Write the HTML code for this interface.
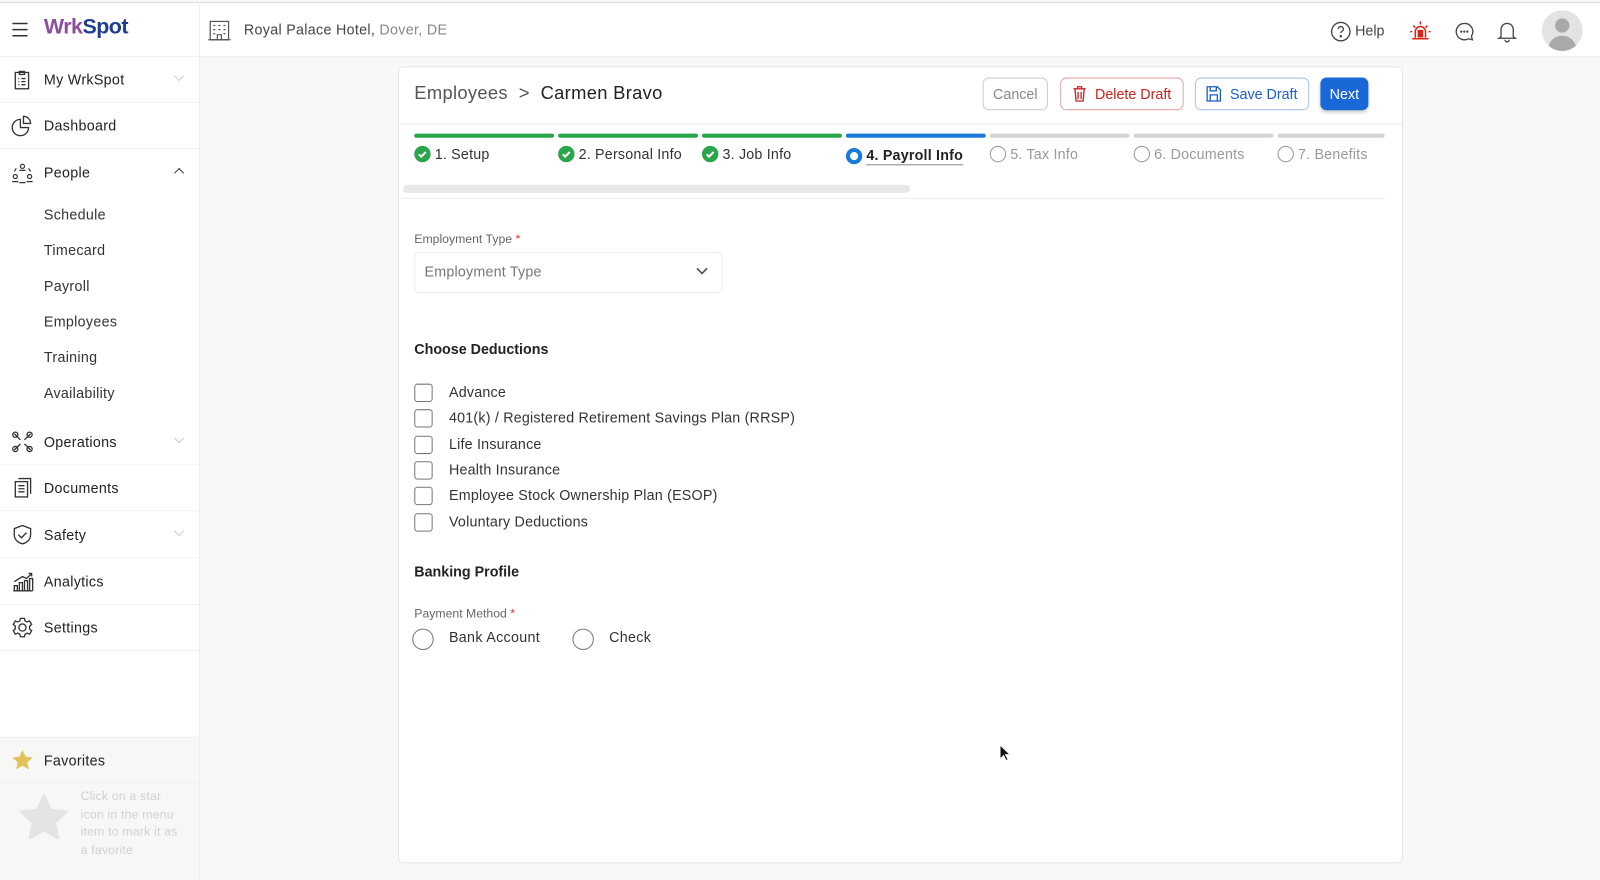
<!DOCTYPE html>
<html><head><meta charset="utf-8"><style>
*{box-sizing:border-box;margin:0;padding:0}
html,body{width:1600px;height:880px;overflow:hidden;background:#f8f8f7;font-family:"Liberation Sans",sans-serif;color:#222}
#w{position:absolute;left:0;top:0;width:1568px;height:862px;transform:scale(1.0204);transform-origin:0 0;background:#f8f8f7}
.abs{position:absolute}
.hdr{left:0;top:2px;width:1568px;height:54px;background:#fff;border-top:1px solid #ddd;border-bottom:1px solid #eee}
.side{left:0;top:56px;width:196px;height:806px;background:#fff;border-right:1px solid #eee}
.it{position:absolute;left:0;width:195px;height:45px;font-size:14px;color:#222;display:flex;align-items:center;padding-left:43px;border-bottom:1px solid #f2f2f2;letter-spacing:.3px}
.it svg{position:absolute;left:11px}
.sub{position:absolute;left:43px;font-size:14px;color:#333;letter-spacing:.3px}
.chev{position:absolute;right:16px;width:7px;height:7px;border-right:1.3px solid #ccc;border-bottom:1.3px solid #ccc;transform:rotate(45deg);top:15px}
.card{left:390px;top:65px;width:985px;height:781px;background:#fff;border:1px solid #e6e6e6;border-radius:5px}
.btn{position:absolute;top:76px;height:32px;border-radius:6px;font-size:14px;display:flex;align-items:center;justify-content:center}
.bar{position:absolute;top:131px;height:4px;width:137px;border-radius:2px}
.lab{position:absolute;top:143px;font-size:14px;display:flex;align-items:center;gap:4px;white-space:nowrap;letter-spacing:.2px}
.ck{width:16px;height:16px;border-radius:50%;background:#2aa54a;display:inline-flex;align-items:center;justify-content:center}
.em{width:16px;height:16px;border-radius:50%;border:1.5px solid #999;display:inline-block}
.cb{position:absolute;left:406px;width:18px;height:18px;border:1.5px solid #777;border-radius:3px}
.cl{position:absolute;left:440px;font-size:14px;color:#333;letter-spacing:.2px}
</style></head><body><div id="w">
<div class="abs hdr"></div>
<svg class="abs" style="left:12px;top:22px" width="16" height="14"><path d="M0 1h15M0 7h15M0 13h15" stroke="#333" stroke-width="1.5"/></svg>
<div class="abs" style="left:43px;top:15px;font-size:21px;font-weight:bold;letter-spacing:-0.5px"><span style="color:#8e4d9c">Wrk</span><span style="color:#1c3f8f">Spot</span></div>
<div class="abs" style="left:195px;top:2px;width:1px;height:54px;background:#eee"></div>
<svg class="abs" style="left:204px;top:18px" width="22" height="22" fill="none" stroke="#555" stroke-width="1.2"><rect x="2" y="3" width="18" height="18"/><path d="M0 21h22M5 7h2M10 7h2M15 7h2M5 11h2M10 11h2M15 11h2M5 15h2M15 15h2M9 21v-5h4v5"/></svg>
<div class="abs" style="left:239px;top:21px;font-size:14px;color:#444;letter-spacing:.3px">Royal Palace Hotel, <span style="color:#888">Dover, DE</span></div>
<svg class="abs" style="left:1304px;top:21px" width="20" height="20" fill="none" stroke="#444" stroke-width="1.3"><circle cx="10" cy="10" r="9"/><path d="M7.5 7.5a2.5 2.5 0 1 1 3.5 2.3c-.8.4-1 1-1 1.7"/><circle cx="10" cy="14.5" r=".6" fill="#444"/></svg>
<div class="abs" style="left:1328px;top:22px;font-size:14px;color:#444">Help</div>
<svg class="abs" style="left:1381px;top:19px" width="22" height="22" fill="none" stroke="#d8261c" stroke-width="1.5"><path d="M6 18v-6a5 5 0 0 1 10 0v6M3 19h16M11 2v3M4 6l2 2M18 6l-2 2M1 12h2M19 12h2"/><rect x="9" y="11" width="4" height="6" fill="#d8261c"/></svg>
<svg class="abs" style="left:1425px;top:21px" width="20" height="20" fill="none" stroke="#444" stroke-width="1.3"><path d="M10 2a8 8 0 1 0 4 15l4 1-1-3.5A8 8 0 0 0 10 2z"/><circle cx="7" cy="10" r=".5" fill="#444"/><circle cx="10" cy="10" r=".5" fill="#444"/><circle cx="13" cy="10" r=".5" fill="#444"/></svg>
<svg class="abs" style="left:1467px;top:20px" width="20" height="22" fill="none" stroke="#444" stroke-width="1.3"><path d="M4 16V9a6 6 0 0 1 12 0v7l2 1.5H2zM8 19a2 2 0 0 0 4 0"/></svg>
<div class="abs" style="left:1511px;top:10px;width:40px;height:40px;border-radius:50%;background:#e3e3e3;overflow:hidden"><div class="abs" style="left:13px;top:8px;width:14px;height:14px;border-radius:50%;background:#a9a9a9"></div><div class="abs" style="left:6px;top:25px;width:28px;height:18px;border-radius:14px 14px 0 0;background:#a9a9a9"></div></div>

<div class="abs side">
<div class="it" style="top:0">My WrkSpot<svg width="20" height="20" fill="none" stroke="#333" stroke-width="1.3"><rect x="4" y="3" width="13" height="16"/><path d="M8 2h5v3H8zM7 9h1M10 9h4M7 12h1M10 12h4M7 15h1M10 15h4"/></svg><i class="chev"></i></div>
<div class="it" style="top:45px">Dashboard<svg width="22" height="22" fill="none" stroke="#333" stroke-width="1.3"><path d="M9 5a8 8 0 1 0 8 8H9z"/><path d="M12 2a7 7 0 0 1 7 7h-7z"/></svg></div>
<div class="it" style="top:90px;border:0">People<svg width="22" height="22" fill="none" stroke="#333" stroke-width="1.2"><circle cx="11" cy="5" r="2"/><circle cx="4" cy="15" r="2"/><circle cx="18" cy="15" r="2"/><path d="M8 9h6M1 20h6M15 20h6M8 21h6M3 10l2-3M19 10l-2-3"/></svg><i class="chev" style="border-color:#333;transform:rotate(-135deg);top:20px"></i></div>
<div class="sub" style="top:146px">Schedule</div>
<div class="sub" style="top:181px">Timecard</div>
<div class="sub" style="top:216px">Payroll</div>
<div class="sub" style="top:251px">Employees</div>
<div class="sub" style="top:286px">Training</div>
<div class="sub" style="top:321px">Availability</div>
<div class="it" style="top:355px">Operations<svg width="22" height="22" fill="none" stroke="#333" stroke-width="1.3"><path d="M3 3l6 6M19 3l-6 6M3 19l6-6M19 19l-6-6"/><circle cx="4" cy="4" r="2.5"/><circle cx="18" cy="4" r="2.5"/><circle cx="4" cy="18" r="2.5"/><circle cx="18" cy="18" r="2.5"/></svg><i class="chev"></i></div>
<div class="it" style="top:400px">Documents<svg width="22" height="22" fill="none" stroke="#333" stroke-width="1.3"><rect x="4" y="5" width="12" height="15"/><path d="M7 2h12v15M7 9h6M7 12h6M7 15h6"/></svg></div>
<div class="it" style="top:446px">Safety<svg width="22" height="22" fill="none" stroke="#333" stroke-width="1.3"><path d="M11 2l8 3v6c0 5-4 8-8 9-4-1-8-4-8-9V5z"/><path d="M7 11l3 3 5-5"/></svg><i class="chev"></i></div>
<div class="it" style="top:492px">Analytics<svg width="22" height="22" fill="none" stroke="#333" stroke-width="1.3"><path d="M2 20h19M3 20v-5h3v5M8 20v-8h3v8M13 20v-10h3v10M18 20v-12h3v12M3 11l8-5 4 2 5-5M17 3h3v3"/></svg></div>
<div class="it" style="top:537px">Settings<svg width="22" height="22" fill="none" stroke="#333" stroke-width="1.3"><circle cx="11" cy="11" r="3.5"/><path d="M9 2h4l.5 2.5 2 1 2.5-1 2 3.5-2 1.6v2.8l2 1.6-2 3.5-2.5-1-2 1L13 20H9l-.5-2.5-2-1-2.5 1-2-3.5 2-1.6V9.6l-2-1.6 2-3.5 2.5 1 2-1z"/></svg></div>
<div class="abs" style="left:0;top:673px;width:195px;height:133px;background:#f7f7f6"></div>
<div class="it" style="top:666px;background:#f7f7f6;border-top:1px solid #eee;border-bottom:1px dotted #e8e8e8">Favorites<svg width="22" height="22"><path d="M11 1l3 6.5 7 .8-5.2 4.8 1.4 7L11 16.5 4.8 20l1.4-7L1 8.3l7-.8z" fill="#e2c35a"/></svg></div>
<svg class="abs" style="left:18px;top:722px" width="50" height="50"><path d="M25 2l6.5 14 15 1.6-11.2 10.4 3.2 15L25 35.5 11.5 43l3.2-15L3.5 17.6l15-1.6z" fill="#e4e4e6" stroke="#e4e4e6" stroke-linejoin="round" stroke-width="3"/></svg>
<div class="abs" style="left:79px;top:716px;width:103px;font-size:12px;line-height:17.5px;color:#d0d0d4;letter-spacing:.2px">Click on a star icon in the menu item to mark it as a favorite</div>
</div>

<div class="abs card"></div>
<div class="abs" style="left:406px;top:81px;font-size:18px;color:#555;letter-spacing:.3px">Employees &nbsp;&gt;&nbsp; <span style="color:#222">Carmen Bravo</span></div>
<div class="btn" style="left:963px;width:64px;border:1px solid #ccc;color:#888">Cancel</div>
<div class="btn" style="left:1039px;width:121px;border:1px solid #e2a6a6;color:#c8221c;gap:8px"><svg width="14" height="16" fill="none" stroke="#c8221c" stroke-width="1.3"><path d="M1 3h12M5 3V1h4v2M2.5 3l1 12h7l1-12M5.5 6v7M8.5 6v7"/></svg>Delete Draft</div>
<div class="btn" style="left:1171px;width:112px;border:1px solid #a9c3e8;color:#1a5ec8;gap:8px"><svg width="15" height="16" fill="none" stroke="#1a5ec8" stroke-width="1.3"><path d="M1 1h10l3 3v11H1zM4 1v4h6V1M4 15V9h7v6"/></svg>Save Draft</div>
<div class="btn" style="left:1294px;width:47px;background:#1a68d8;color:#fff;box-shadow:0 2px 3px rgba(0,0,0,.2)">Next</div>
<div class="abs" style="left:391px;top:121px;width:983px;height:1px;background:#eee"></div>
<div class="bar" style="left:406px;background:#2aa54a"></div>
<div class="bar" style="left:547px;background:#2aa54a"></div>
<div class="bar" style="left:688px;background:#2aa54a"></div>
<div class="bar" style="left:829px;background:#1a7ad8"></div>
<div class="bar" style="left:970px;background:#d4d4d4"></div>
<div class="bar" style="left:1111px;background:#d4d4d4"></div>
<div class="bar" style="left:1252px;width:105px;background:#d4d4d4"></div>
<svg width="0" height="0" style="position:absolute"><defs><path id="t" d="M4.5 8.2l2.3 2.3 4.6-4.6" stroke="#fff" stroke-width="2" fill="none"/></defs></svg>
<div class="lab" style="left:406px;color:#333"><span class="ck"><svg width="16" height="16"><use href="#t"/></svg></span>1. Setup</div>
<div class="lab" style="left:547px;color:#333"><span class="ck"><svg width="16" height="16"><use href="#t"/></svg></span>2. Personal Info</div>
<div class="lab" style="left:688px;color:#333"><span class="ck"><svg width="16" height="16"><use href="#t"/></svg></span>3. Job Info</div>
<div class="lab" style="left:829px;top:144px;color:#222;font-weight:bold"><span style="width:16px;height:16px;border-radius:50%;border:4.5px solid #1a7ad8;display:inline-block"></span><span style="border-bottom:1px solid #888;padding-bottom:1px">4. Payroll Info</span></div>
<div class="lab" style="left:970px;color:#999"><span class="em"></span>5. Tax Info</div>
<div class="lab" style="left:1111px;color:#999"><span class="em"></span>6. Documents</div>
<div class="lab" style="left:1252px;color:#999"><span class="em"></span>7. Benefits</div>
<div class="abs" style="left:395px;top:181px;width:497px;height:8px;border-radius:4px;background:#e8e8e8"></div>
<div class="abs" style="left:391px;top:194px;width:966px;height:1px;background:#eee"></div>

<div class="abs" style="left:406px;top:227px;font-size:12px;color:#666">Employment Type <span style="color:#d33">*</span></div>
<div class="abs" style="left:406px;top:247px;width:302px;height:40px;border:1px solid #eee;border-radius:4px"></div>
<div class="abs" style="left:416px;top:258px;font-size:14px;color:#777;letter-spacing:.2px">Employment Type</div>
<svg class="abs" style="left:682px;top:262px" width="12" height="8"><path d="M1 1l5 5 5-5" stroke="#555" stroke-width="1.6" fill="none"/></svg>
<div class="abs" style="left:406px;top:334px;font-size:14px;font-weight:bold;color:#222">Choose Deductions</div>
<div class="cb" style="top:376px"></div><div class="cl" style="top:376px">Advance</div>
<div class="cb" style="top:401px"></div><div class="cl" style="top:401px">401(k) / Registered Retirement Savings Plan (RRSP)</div>
<div class="cb" style="top:427px"></div><div class="cl" style="top:427px">Life Insurance</div>
<div class="cb" style="top:452px"></div><div class="cl" style="top:452px">Health Insurance</div>
<div class="cb" style="top:477px"></div><div class="cl" style="top:477px">Employee Stock Ownership Plan (ESOP)</div>
<div class="cb" style="top:503px"></div><div class="cl" style="top:503px">Voluntary Deductions</div>
<div class="abs" style="left:406px;top:552px;font-size:14px;font-weight:bold;color:#222">Banking Profile</div>
<div class="abs" style="left:406px;top:594px;font-size:12px;color:#666">Payment Method <span style="color:#d33">*</span></div>
<div class="abs" style="left:404px;top:616px;width:21px;height:21px;border-radius:50%;border:1.5px solid #777"></div>
<div class="abs" style="left:440px;top:616px;font-size:14px;color:#333;letter-spacing:.3px">Bank Account</div>
<div class="abs" style="left:561px;top:616px;width:21px;height:21px;border-radius:50%;border:1.5px solid #777"></div>
<div class="abs" style="left:597px;top:616px;font-size:14px;color:#333;letter-spacing:.3px">Check</div>
<svg class="abs" style="left:979px;top:729px" width="12" height="18"><path d="M1 1v14l3.5-3.5 2.5 5 2-1-2.5-5H11z" fill="#111" stroke="#fff" stroke-width="1"/></svg>
</div></body></html>
